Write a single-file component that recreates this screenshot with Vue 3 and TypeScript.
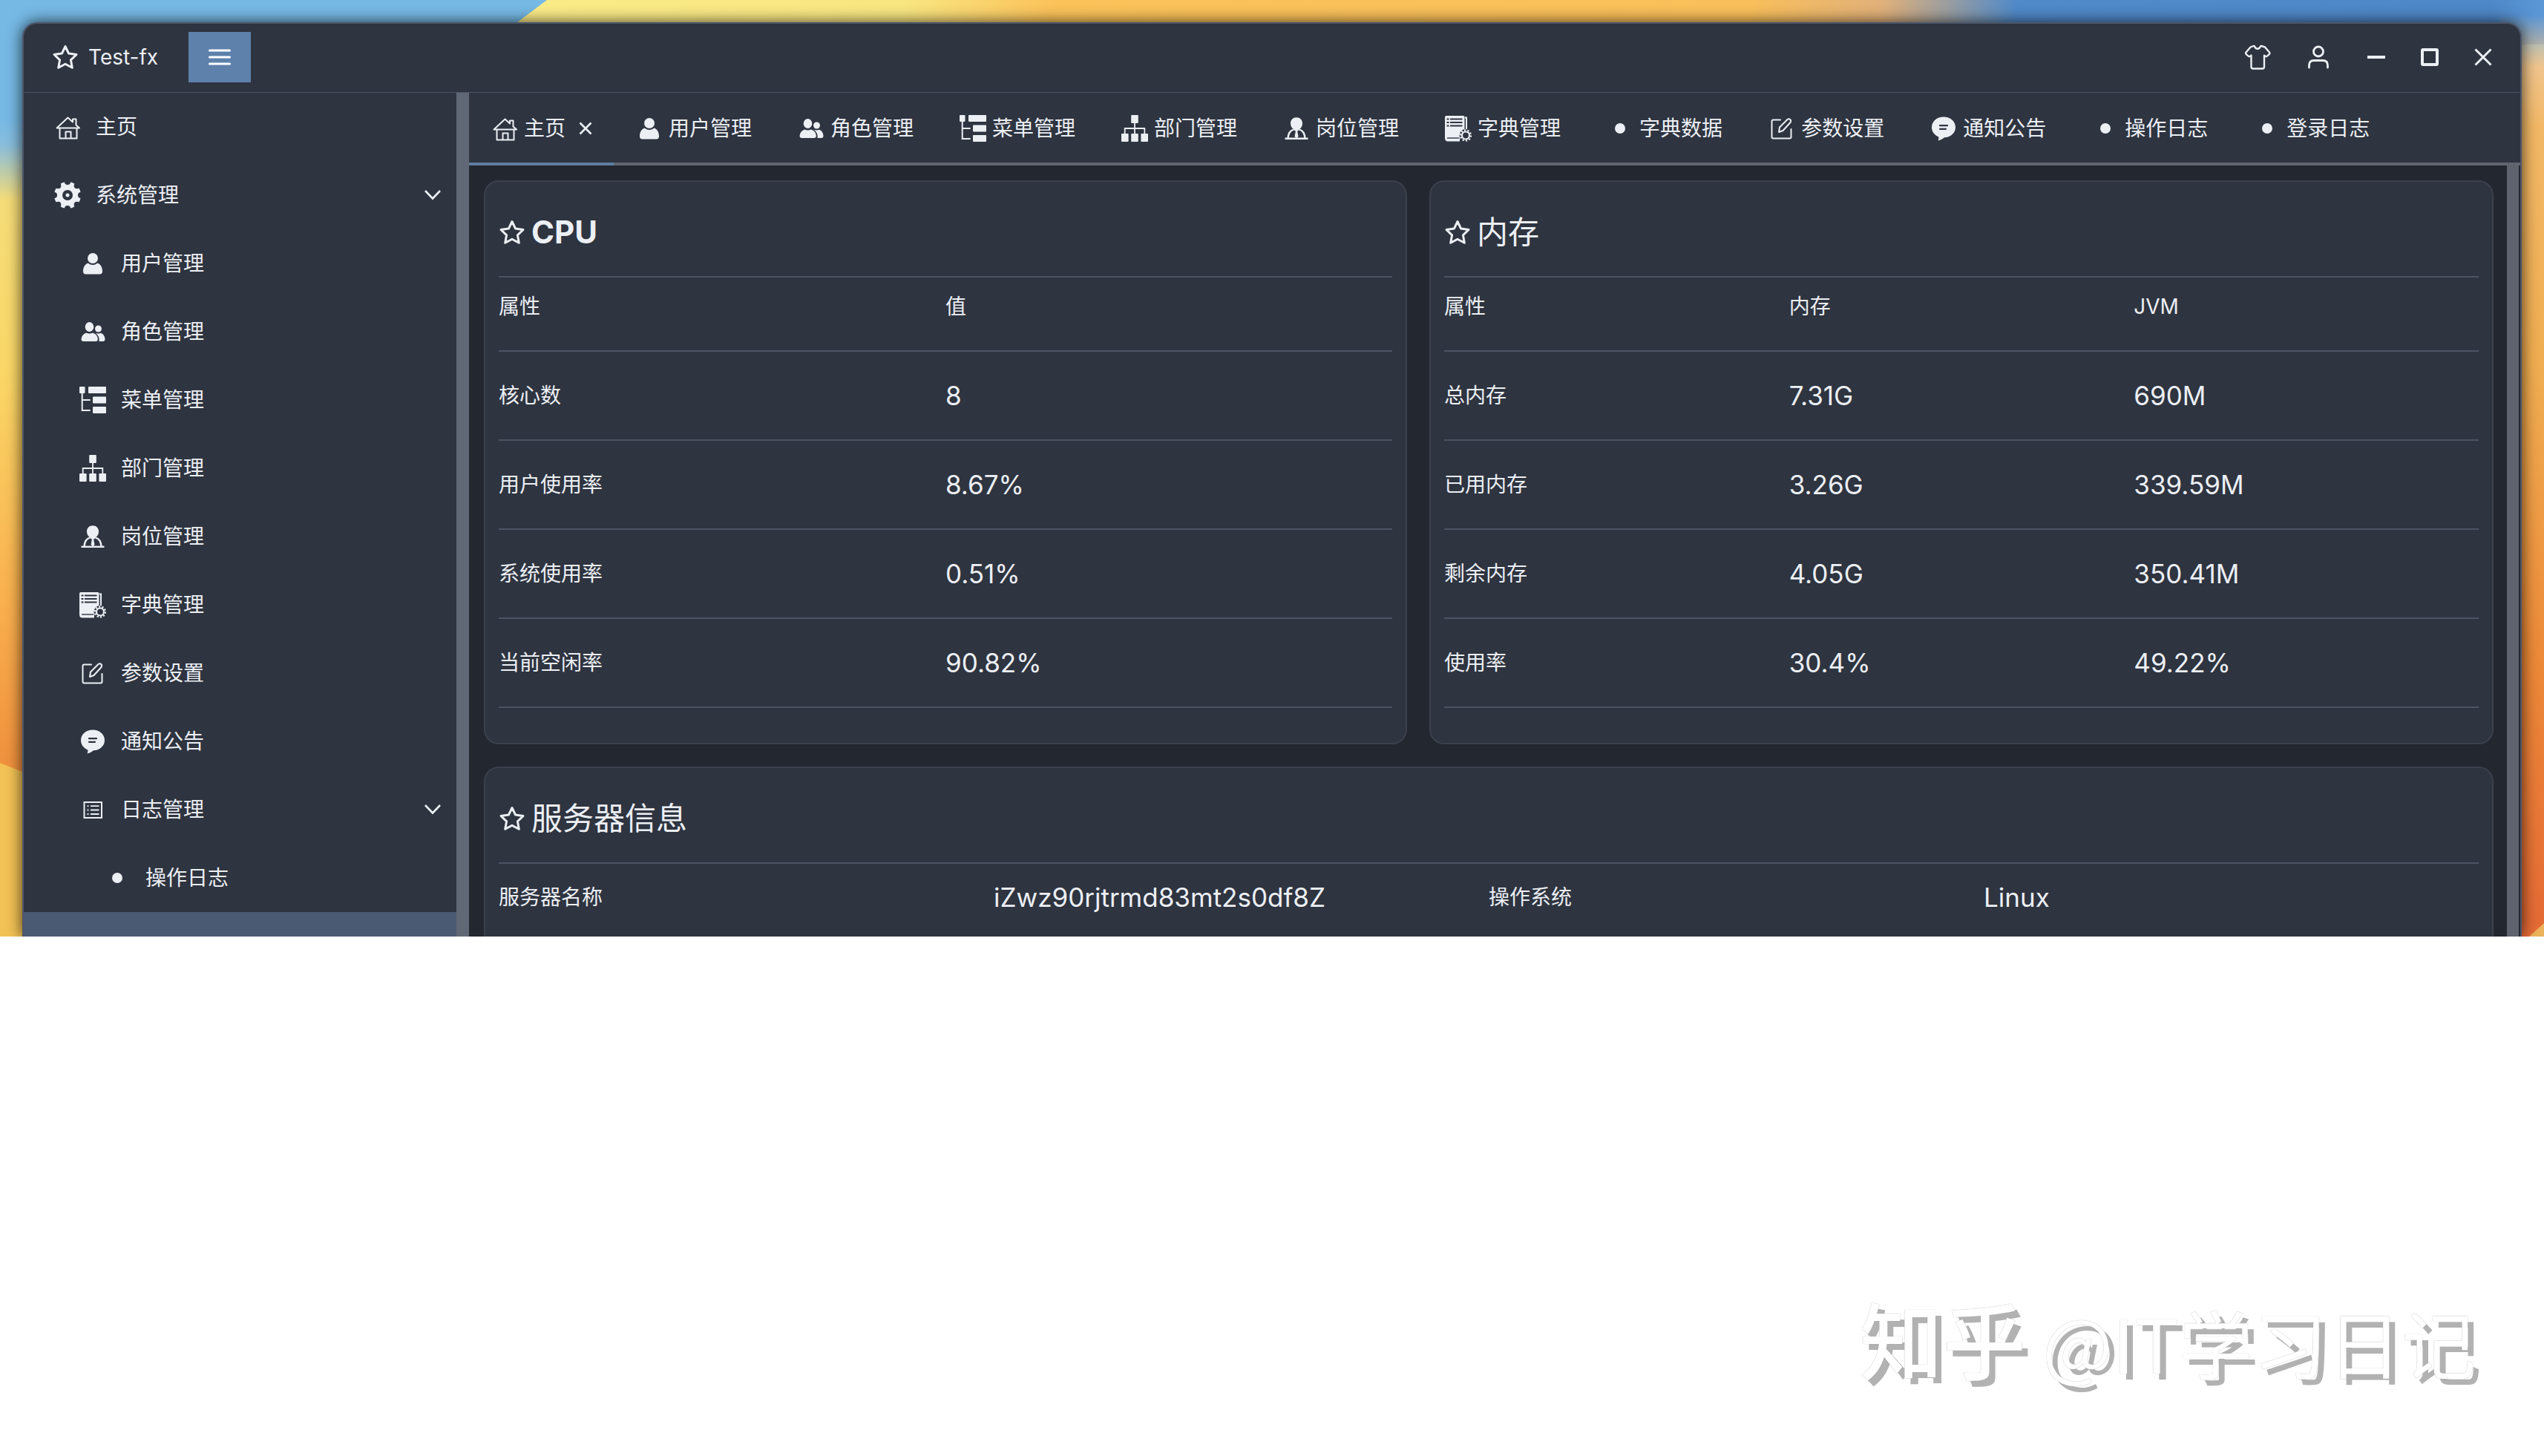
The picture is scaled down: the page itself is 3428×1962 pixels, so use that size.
<script setup lang="ts">
import { ref } from 'vue'

interface MenuItem {
  icon: string
  label: string
  level: number
  group?: boolean
  active?: boolean
}

const menu: MenuItem[] = [
  { icon: 'home', label: '主页', level: 0 },
  { icon: 'gear', label: '系统管理', level: 0, group: true },
  { icon: 'user', label: '用户管理', level: 1 },
  { icon: 'users', label: '角色管理', level: 1 },
  { icon: 'tree', label: '菜单管理', level: 1 },
  { icon: 'org', label: '部门管理', level: 1 },
  { icon: 'post', label: '岗位管理', level: 1 },
  { icon: 'dict', label: '字典管理', level: 1 },
  { icon: 'edit', label: '参数设置', level: 1 },
  { icon: 'chat', label: '通知公告', level: 1 },
  { icon: 'list', label: '日志管理', level: 1, group: true },
  { icon: 'dot', label: '操作日志', level: 2 },
  { icon: '', label: '', level: 2, active: true },
]

const tabs: { icon: string; label: string }[] = [
  { icon: 'home', label: '主页' },
  { icon: 'user', label: '用户管理' },
  { icon: 'users', label: '角色管理' },
  { icon: 'tree', label: '菜单管理' },
  { icon: 'org', label: '部门管理' },
  { icon: 'post', label: '岗位管理' },
  { icon: 'dict', label: '字典管理' },
  { icon: 'dot', label: '字典数据' },
  { icon: 'edit', label: '参数设置' },
  { icon: 'chat', label: '通知公告' },
  { icon: 'dot', label: '操作日志' },
  { icon: 'dot', label: '登录日志' },
]
const current = ref(0)

const cpu: string[][] = [
  ['核心数', '8'],
  ['用户使用率', '8.67%'],
  ['系统使用率', '0.51%'],
  ['当前空闲率', '90.82%'],
]
const memory: string[][] = [
  ['总内存', '7.31G', '690M'],
  ['已用内存', '3.26G', '339.59M'],
  ['剩余内存', '4.05G', '350.41M'],
  ['使用率', '30.4%', '49.22%'],
]
</script>

<template>
  <div class="page">
    <svg class="sprite" aria-hidden="true">
      <symbol id="star" viewBox="0 0 36 36">
        <path d="M18 3.500l4.600 9.600 10.400 1.400-7.600 7.300 1.900 10.500L18 27.300l-9.300 5 1.900-10.500L3 14.500l10.400-1.400z" fill="none" stroke="currentColor" stroke-width="3" stroke-linejoin="round" />
      </symbol>
      <symbol id="home" viewBox="0 0 36 36">
        <g fill="none" stroke="currentColor" stroke-width="2" stroke-linejoin="round">
          <path d="M3.500 19.500L18.500 5.500l6.500 6V7.500h4.500v8l4.500 4z" />
          <path d="M7.500 19.500v14h23v-14" />
          <path d="M15.500 33.500v-9h7v9" />
        </g>
      </symbol>
      <symbol id="gear" viewBox="0 0 36 36">
        <mask id="gear-cut">
          <circle cx="18" cy="18" r="18" fill="#fff" />
          <g fill="#000">
            <circle cx="18" cy="0" r="4" />
            <circle cx="30.700" cy="5.300" r="4" />
            <circle cx="36" cy="18" r="4" />
            <circle cx="30.700" cy="30.700" r="4" />
            <circle cx="18" cy="36" r="4" />
            <circle cx="5.300" cy="30.700" r="4" />
            <circle cx="0" cy="18" r="4" />
            <circle cx="5.300" cy="5.300" r="4" />
            <circle cx="18" cy="18" r="7" />
          </g>
        </mask>
        <rect width="36" height="36" fill="currentColor" mask="url(#gear-cut)" />
        <circle cx="18" cy="18" r="2.500" fill="currentColor" />
      </symbol>
      <symbol id="user" viewBox="0 0 36 36">
        <g fill="currentColor">
          <circle cx="18" cy="11" r="7" />
          <path d="M11.500 17.500q6.500 5 13 0c4 1.500 6.500 5.500 6.500 11 0 3-1.500 4-4 4H9c-2.500 0-4-1-4-4 0-5.500 2.500-9.500 6.500-11z" />
        </g>
      </symbol>
      <symbol id="users" viewBox="0 0 36 36">
        <g fill="currentColor">
          <ellipse cx="13.500" cy="11.500" rx="5.800" ry="6.500" />
          <path d="M9 19.500q4.500 2 9 0c4.500 1.500 6.500 4.500 6.800 8.500 0 2-1 3-3 3H5.500c-2 0-3-1-3-3 .5-4 2.500-7 6.500-8.500z" />
          <ellipse cx="25.500" cy="14" rx="4.500" ry="4.500" />
          <path d="M21.500 19.800q4 1.500 7.500 0c3.500 1.200 5.300 4.500 5.500 8.200 0 2-1 3-2.500 3h-5.500c.8-4-1-8.500-5-11.200z" />
        </g>
      </symbol>
      <symbol id="tree" viewBox="0 0 36 36">
        <g fill="currentColor">
          <rect x="0" y="0" width="7.500" height="9" rx="1" />
          <rect x="12" y="0" width="24" height="9" rx="1" />
          <rect x="18" y="13.500" width="18" height="9" rx="1" />
          <rect x="18" y="27" width="18" height="9" rx="1" />
        </g>
        <path d="M3.700 8v24h11M3.700 18h11" fill="none" stroke="currentColor" stroke-width="2" />
      </symbol>
      <symbol id="org" viewBox="0 0 36 36">
        <g fill="currentColor">
          <rect x="13.200" y="0" width="9.600" height="11" rx="1" />
          <rect x="0" y="25" width="9.600" height="11" rx="1" />
          <rect x="13.200" y="25" width="9.600" height="11" rx="1" />
          <rect x="26.400" y="25" width="9.600" height="11" rx="1" />
        </g>
        <path d="M18 10v16M4.700 26v-8h26.600v8" fill="none" stroke="currentColor" stroke-width="1.800" />
      </symbol>
      <symbol id="post" viewBox="0 0 36 36">
        <path d="M18 3.300c4.800 0 8 3.500 8 8 0 3.500-1.500 6-3.700 7.500L20 21.500h-4l-2.300-2.700C11.500 17.300 10 14.800 10 11.300c0-4.500 3.200-8 8-8z" fill="currentColor" />
        <path d="M14.500 19.300C10 20.500 6.800 25 6.500 31.500M21.500 19.300c4.500 1.200 7.700 5.700 8 12.200" fill="none" stroke="currentColor" stroke-width="2.400" />
        <path d="M17 21h2l1.500 8L18 31.500 15.500 29z" fill="currentColor" />
        <path d="M2.500 31.800h31" stroke="currentColor" stroke-width="2.400" />
      </symbol>
      <symbol id="dict" viewBox="0 0 36 36">
        <mask id="dict-cut">
          <rect width="36" height="36" fill="#fff" />
          <path d="M2.500 5.500h3M7 5.500h16.500M2.500 10h3M7 10h16.500M2.500 14.500h3M7 14.500h16.500" stroke="#000" stroke-width="2" />
          <path d="M3 31h16" stroke="#000" stroke-width="1.400" />
          <circle cx="28" cy="27.500" r="8.500" fill="#000" />
        </mask>
        <g mask="url(#dict-cut)">
          <path d="M2 1h23q1.500 0 1.500 1.500V29H20v6.500H4Q0 35.500 0 31V3q0-2 2-2z" fill="currentColor" />
          <path d="M27 3.500h2V20" fill="none" stroke="currentColor" stroke-width="2" />
        </g>
        <circle cx="28" cy="27.500" r="5" fill="none" stroke="currentColor" stroke-width="2.200" />
        <circle cx="28" cy="27.500" r="7" fill="none" stroke="currentColor" stroke-width="2.400" stroke-dasharray="2.200 2.200" />
      </symbol>
      <symbol id="edit" viewBox="0 0 36 36">
        <g fill="none" stroke="currentColor" stroke-width="2" stroke-linecap="round" stroke-linejoin="round">
          <path d="M16 6.500H6.500q-2 0-2 2v21q0 2 2 2h22q2 0 2-2V19" />
          <path d="M14 23l1-6.500L25.500 6q2-1.500 3.700 0t.3 4L19.500 21z" />
        </g>
      </symbol>
      <symbol id="chat" viewBox="0 0 36 36">
        <path d="M18 2.500c9 0 16 6 16 14s-7 13.700-15 13.700c-2 1.500-5 3.500-8.500 4.200.8-1.800 1-3.500.8-5C5.500 27 2 22.500 2 16.500c0-8 7-14 16-14z" fill="currentColor" />
        <path d="M13 14.200h10M13 18.800h8" stroke="#2e3440" stroke-width="2.200" stroke-linecap="round" />
      </symbol>
      <symbol id="list" viewBox="0 0 36 36">
        <path d="M6.500 8h23.500v21H6.500z" fill="none" stroke="currentColor" stroke-width="2" />
        <path d="M15 13.200h11.500M15 18.500h11.500M15 24h11.500M10.500 13.200h2M10.500 18.500h2M10.500 24h2" stroke="currentColor" stroke-width="1.800" />
      </symbol>
      <symbol id="dot" viewBox="0 0 36 36">
        <circle cx="18" cy="18" r="7" fill="currentColor" />
      </symbol>
      <symbol id="shirt" viewBox="0 0 36 36">
        <path d="M12.500 3L8.500 4.500 2.500 11.500q-1 1.500.5 2.800l3 2.500q1 .7 2 0l1.500-1.200V31q0 2.500 2.500 2.500h12.500q2.500 0 2.500-2.500V15.600l1.500 1.200q1 .7 2 0l3-2.500q1.500-1.300.5-2.800l-6-7L23.500 3q-1.500-.3-2 1.200-1 2.500-3.500 2.500t-3.500-2.500Q14 2.700 12.500 3z" fill="none" stroke="currentColor" stroke-width="2.400" stroke-linejoin="round" />
      </symbol>
      <symbol id="person" viewBox="0 0 36 36">
        <g fill="none" stroke="currentColor" stroke-width="2.800" stroke-linecap="round">
          <circle cx="18" cy="10.500" r="6.500" />
          <path d="M5.500 32v-3q0-6.500 6.500-6.500h12q6.500 0 6.500 6.500v3" />
        </g>
      </symbol>
    </svg>

    <div class="desktop">
      <div class="wall wall-top"></div>
      <div class="wall wall-left"></div>
      <div class="wall wall-left-low"></div>
      <div class="wall wall-right"></div>
      <div class="wall wall-right-low"></div>

      <div class="window">
        <header class="titlebar">
          <svg class="icon"><use href="#star" /></svg>
          <span class="app-name">Test-fx</span>
          <button class="burger" type="button" aria-label="菜单">
            <svg width="32" height="24" viewBox="0 0 32 24"><path d="M2.500 3h27M2.500 12h27M2.500 21h27" stroke="#fff" stroke-width="3" stroke-linecap="round" /></svg>
          </button>
          <div class="tools">
            <button type="button" aria-label="主题" class="tool"><svg class="icon"><use href="#shirt" /></svg></button>
            <button type="button" aria-label="账户" class="tool"><svg class="icon"><use href="#person" /></svg></button>
            <button type="button" aria-label="最小化" class="win"><svg width="24" height="24"><path d="M0 12h24" stroke="currentColor" stroke-width="4" /></svg></button>
            <button type="button" aria-label="最大化" class="win"><svg width="24" height="24"><rect x="2" y="2" width="20" height="20" rx="1" fill="none" stroke="currentColor" stroke-width="4" /></svg></button>
            <button type="button" aria-label="关闭" class="win"><svg width="24" height="24"><path d="M1.500 1.500l21 21M22.500 1.500l-21 21" stroke="currentColor" stroke-width="3" /></svg></button>
          </div>
        </header>

        <div class="body">
          <nav class="sidebar">
            <button
              v-for="(m, i) in menu"
              :key="i"
              type="button"
              class="item"
              :class="['level-' + m.level, { active: m.active }]"
            >
              <svg v-if="m.icon" class="icon"><use :href="'#' + m.icon" /></svg>
              <span>{{ m.label }}</span>
              <svg v-if="m.group" class="chevron" width="24" height="16"><path d="M2 2l10 10.500L22 2" fill="none" stroke="currentColor" stroke-width="2.600" /></svg>
            </button>
          </nav>
          <div class="divider"></div>

          <main class="main">
            <div class="tabs" role="tablist">
              <button
                v-for="(t, i) in tabs"
                :key="t.label"
                type="button"
                role="tab"
                class="tab"
                :class="{ current: i === current }"
                :aria-selected="i === current"
                @click="current = i"
              >
                <svg class="icon"><use :href="'#' + t.icon" /></svg>
                <span>{{ t.label }}</span>
                <svg v-if="i === current" class="close" width="18" height="18"><path d="M1.500 1.500l15 15M16.500 1.500l-15 15" stroke="currentColor" stroke-width="2.600" /></svg>
              </button>
            </div>

            <div class="scroll">
              <div class="cards">
                <section class="card">
                  <h2 class="latin"><svg class="icon"><use href="#star" /></svg>CPU</h2>
                  <table>
                    <thead><tr><th>属性</th><th>值</th></tr></thead>
                    <tbody>
                      <tr v-for="r in cpu" :key="r[0]">
                        <th scope="row">{{ r[0] }}</th>
                        <td>{{ r[1] }}</td>
                      </tr>
                    </tbody>
                  </table>
                </section>

                <section class="card">
                  <h2><svg class="icon"><use href="#star" /></svg>内存</h2>
                  <table>
                    <thead><tr><th>属性</th><th>内存</th><th>JVM</th></tr></thead>
                    <tbody>
                      <tr v-for="r in memory" :key="r[0]">
                        <th scope="row">{{ r[0] }}</th>
                        <td>{{ r[1] }}</td>
                        <td>{{ r[2] }}</td>
                      </tr>
                    </tbody>
                  </table>
                </section>

                <section class="card wide">
                  <h2><svg class="icon"><use href="#star" /></svg>服务器信息</h2>
                  <table class="server">
                    <tbody>
                      <tr>
                        <th scope="row">服务器名称</th>
                        <td>iZwz90rjtrmd83mt2s0df8Z</td>
                        <th scope="row">操作系统</th>
                        <td>Linux</td>
                      </tr>
                    </tbody>
                  </table>
                </section>
              </div>
              <div class="scrollbar"></div>
            </div>
          </main>
        </div>
      </div>
    </div>

    <footer class="credit">
      <p><span class="brand">知乎</span> @IT学习日记</p>
    </footer>
  </div>
</template>

<style>
html,
body {
  background: #fff;
}
</style>

<style scoped>
* {
  box-sizing: border-box;
}
.page {
  display: grid;
  grid-template-rows: 1262fr 700fr;
  height: 100vh;
  overflow: hidden;
  color: #eceff4;
  font-family: Inter, 'Noto Sans CJK SC', sans-serif;
  font-size: 28px;
  line-height: 40px;
}
.sprite {
  position: absolute;
  width: 0;
  height: 0;
}
.icon {
  flex: none;
  width: 36px;
  height: 36px;
}
button {
  padding: 0;
  border: 0;
  background: none;
  color: inherit;
  font: inherit;
}
.desktop {
  position: relative;
  display: flex;
  min-height: 0;
  padding: 30px 30px 0;
  overflow: hidden;
  background: #76b9e5;
}
.wall {
  position: absolute;
}
.wall-left {
  inset: 0 auto 0 0;
  width: 60px;
  background: linear-gradient(#76b9e5 160px, #88bddc 195px, #f5dc78 270px, #fad767 500px, #f9ad4c 830px, #ee8e3c 1050px);
}
.wall-left-low {
  inset: 1028px auto 0 0;
  width: 60px;
  background: #f3c255;
  clip-path: polygon(0 0, 100% 24px, 100% 100%, 0 100%);
}
.wall-top {
  inset: 0 0 auto 657px;
  height: 60px;
  background: linear-gradient(90deg, #fbec88 0, #f8e681 560px, #fbc25a 760px, #f9bf5a 1700px, #e0b07a 1880px, #508ac9 2060px, #4e88c8 2700px, #5b97d6 100%);
  clip-path: polygon(80px 0, 100% 0, 100% 100%, 0 100%);
}
.wall-right {
  inset: 0 0 0 auto;
  width: 60px;
  background: linear-gradient(to bottom, rgba(80, 140, 208, 0) 20px, #f0c48c 90px, #f2b866 170px, #f0ad50 500px, #ec8a38 880px, #e56b35 1240px);
}
.wall-right-low {
  inset: auto 0 0 auto;
  width: 20px;
  height: 18px;
  background: #ecb35c;
  clip-path: polygon(100% 0, 100% 100%, 0 100%);
}
.window {
  position: relative;
  flex: 1;
  display: flex;
  flex-direction: column;
  min-width: 0;
  border: 2px solid #4c566a;
  border-bottom: 0;
  border-radius: 20px 20px 0 0;
  background: #2e3440;
  box-shadow: 0 0 20px rgba(0, 0, 0, 0.75);
  overflow: hidden;
}
.titlebar {
  flex: none;
  display: flex;
  align-items: center;
  height: 93px;
  padding: 0 14px 2px 38px;
  border-bottom: 1px solid #4c5465;
}
.app-name {
  margin-left: 13px;
}
.burger {
  display: flex;
  align-items: center;
  justify-content: center;
  width: 84px;
  height: 68px;
  margin-left: 41px;
  background: #5e81ac;
}
.tools {
  display: flex;
  align-items: center;
  margin-left: auto;
}
.tool {
  display: flex;
  margin-left: 46px;
}
.win {
  display: flex;
  justify-content: center;
  width: 72px;
}
.tool + .win {
  margin-left: 24px;
}
.body {
  flex: 1;
  display: flex;
  min-height: 0;
}
.sidebar {
  flex: none;
  width: 583px;
  overflow: hidden;
}
.item {
  display: flex;
  align-items: center;
  gap: 20px;
  width: 100%;
  height: 92px;
  padding-right: 20px;
}
.level-0 {
  padding-left: 41px;
}
.level-1 {
  padding-left: 75px;
}
.level-2 {
  padding-left: 108px;
}
.item.active {
  background: #4a5a72;
}
.chevron {
  margin-left: auto;
}
.divider {
  flex: none;
  width: 17px;
  background: #616875;
}
.main {
  flex: 1;
  display: flex;
  flex-direction: column;
  min-width: 0;
}
.tabs {
  flex: none;
  display: flex;
  height: 98px;
  box-shadow: inset 0 -4px #60656f;
}
.tab {
  display: flex;
  align-items: center;
  gap: 8px;
  padding: 2px 32px 0 30px;
  border-bottom: 4px solid transparent;
  white-space: nowrap;
}
.tab.current {
  padding-right: 29px;
  border-color: #5f7ea3;
}
.close {
  margin-left: 10px;
}
.scroll {
  flex: 1;
  display: flex;
  min-height: 0;
  padding-right: 2px;
  overflow: hidden;
  background: #232730;
}
.cards {
  flex: 1;
  display: grid;
  grid-template-columns: 1244fr 1434fr;
  align-content: start;
  gap: 30px;
  padding: 20px 18px 0 20px;
}
.scrollbar {
  flex: none;
  width: 16px;
  background: #5e636e;
}
.card {
  min-width: 0;
  padding: 18px 18px 47px;
  border: 2px solid #3b404c;
  border-radius: 20px;
  background: #2e3440;
}
.wide {
  grid-column: span 2;
}
h2 {
  display: flex;
  align-items: center;
  gap: 8px;
  height: 111px;
  margin: 0;
  padding-bottom: 9px;
  border-bottom: 2px solid #4c5363;
  font-size: 42px;
  font-weight: 400;
  line-height: 60px;
}
h2.latin {
  font-weight: 700;
}
table {
  width: 100%;
  border-spacing: 0;
  table-layout: fixed;
}
th,
td {
  padding: 39px 0;
  border-bottom: 2px solid #4c5363;
  text-align: left;
  font-weight: 400;
}
td {
  font-size: 35px;
}
thead th {
  padding: 19px 0 39px;
}
.server th,
.server td {
  padding: 25px 0 53px;
}
.credit {
  display: flex;
  align-items: flex-end;
  justify-content: flex-end;
  padding: 0 92px 84px 0;
}
.credit p {
  margin: 0;
  color: #fff;
  font-family: 'Noto Sans CJK SC', sans-serif;
  font-size: 100px;
  line-height: 140px;
  text-shadow: 0 0 1px #999, 8px 8px 0 #b2b2b2;
}
.brand {
  font-size: 112px;
  font-weight: 500;
}
</style>
